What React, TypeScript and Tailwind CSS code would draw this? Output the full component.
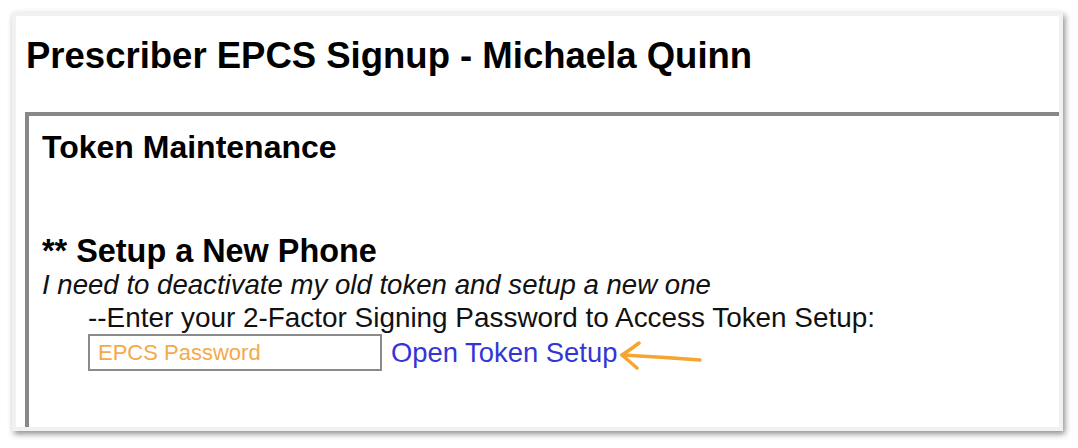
const FONT = { fontFamily: '"Liberation Sans", Arial, Helvetica, sans-serif' };

const ArrowMark = () => (
  <svg width="82" height="32" viewBox="0 0 82 32" className="shrink-0 ml-[3px] mt-[6px]" fill="none">
    <path d="M2 15 Q40 17 80 20" stroke="#f5a531" strokeWidth="3.5" strokeLinecap="round" />
    <path d="M19 3 Q10 10 2 15 Q9 21 17 28" stroke="#f5a531" strokeWidth="3.5" strokeLinecap="round" strokeLinejoin="round" />
  </svg>
);

export default function App() {
  return (
    <div className="min-h-[448px] bg-white pt-[12px] pl-[12px]" style={FONT}>
      <div className="w-[1051px] h-[419px] border-4 border-[#f0f2f2] bg-white shadow-[2px_3px_6px_rgba(0,0,0,0.45)] overflow-hidden flex flex-col">
        <h1 className="pt-[20px] pl-[10px] text-[36.5px] leading-[40px] font-bold text-black whitespace-nowrap">
          Prescriber EPCS Signup - Michaela Quinn
        </h1>

        <section className="mt-[36px] ml-[9px] flex-1 border-l-4 border-t-4 border-[#888888] pl-[13px] pt-[13px] text-black">
          <h2 className="text-[32px] leading-[36px] font-bold whitespace-nowrap">Token Maintenance</h2>

          <h3 className="mt-[68px] text-[32.4px] leading-[36px] font-bold whitespace-nowrap">** Setup a New Phone</h3>
          <p className="text-[27.6px] leading-[32px] italic text-[#111] whitespace-nowrap">
            I need to deactivate my old token and setup a new one
          </p>

          <div className="ml-[46px]">
            <p className="text-[27.9px] leading-[33px] text-[#111] whitespace-nowrap">
              --Enter your 2-Factor Signing Password to Access Token Setup:
            </p>
            <div className="flex items-start">
              <input
                type="password"
                placeholder="EPCS Password"
                className="w-[294px] h-[37px] border-2 border-[#8a8a8a] pl-[8px] text-[22px] outline-none placeholder:text-[#f5a94c]"
                style={FONT}
              />
              <a href="#" className="ml-[9px] text-[27.4px] leading-[37px] text-[#3535d6] whitespace-nowrap">
                Open Token Setup
              </a>
              <ArrowMark />
            </div>
          </div>
        </section>
      </div>
    </div>
  );
}
